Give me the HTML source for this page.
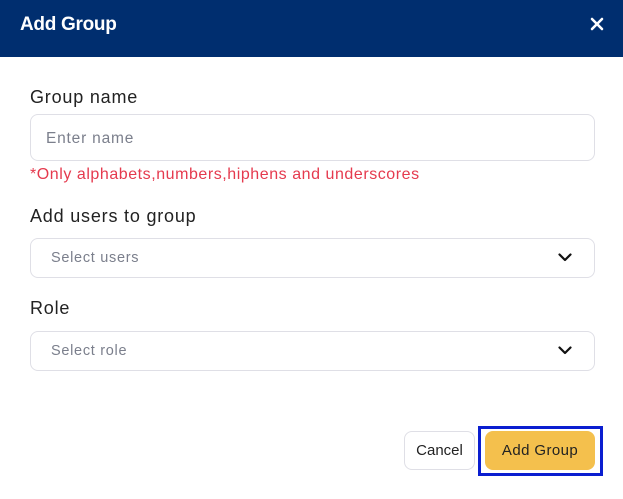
<!DOCTYPE html>
<html><head><style>
*{box-sizing:border-box;margin:0;padding:0}
body{width:623px;height:499px;background:#fff;font-family:"Liberation Sans",sans-serif;position:relative;overflow:hidden}
.hdr{position:absolute;left:0;top:0;width:623px;height:57px;background:#002e6f}
.hdr h1{position:absolute;left:20px;top:14px;font-size:19px;color:#fff;font-weight:bold;letter-spacing:-0.3px}
.lbl{position:absolute;left:30px;font-size:18px;color:#222;letter-spacing:0.8px}
.box{position:absolute;left:30px;width:565px;border:1px solid #dfdfe6;border-radius:8px;color:#7b7f8c}
.err{position:absolute;left:30px;top:166px;font-size:16px;color:#e53a4e;letter-spacing:0.55px}
.btn{position:absolute;border-radius:8px;font-size:15px;color:#222;text-align:center}
</style></head><body>
<div class="hdr"><h1>Add Group</h1>
<svg style="position:absolute;left:590px;top:17px" width="14" height="14" viewBox="0 0 14 14"><path d="M2 2L12 12M12 2L2 12" stroke="#fff" stroke-width="2.6" stroke-linecap="round"/></svg></div>
<div class="lbl" style="top:87px">Group name</div>
<div class="box" style="top:114px;height:47px;font-size:15.5px;padding:15px 0 0 15px;letter-spacing:0.8px">Enter name</div>
<div class="err">*Only alphabets,numbers,hiphens and underscores</div>
<div class="lbl" style="top:206px">Add users to group</div>
<div class="box" style="top:238px;height:40px;font-size:14.5px;padding:11px 0 0 20px;letter-spacing:0.7px">Select users
<svg style="position:absolute;right:22px;top:14px" width="14" height="9" viewBox="0 0 14 9"><path d="M1.5 1.5L7 7L12.5 1.5" stroke="#111" stroke-width="2.2" fill="none" stroke-linecap="round" stroke-linejoin="round"/></svg></div>
<div class="lbl" style="top:298px">Role</div>
<div class="box" style="top:331px;height:40px;font-size:14.5px;padding:11px 0 0 20px;letter-spacing:0.7px">Select role
<svg style="position:absolute;right:22px;top:14px" width="14" height="9" viewBox="0 0 14 9"><path d="M1.5 1.5L7 7L12.5 1.5" stroke="#111" stroke-width="2.2" fill="none" stroke-linecap="round" stroke-linejoin="round"/></svg></div>
<div class="btn" style="left:404px;top:431px;width:71px;height:39px;border:1px solid #dfdfe6;line-height:37px">Cancel</div>
<div style="position:absolute;left:478px;top:426px;width:125px;height:50px;border:3px solid #0a1ed0"></div>
<div class="btn" style="left:485px;top:431px;width:110px;height:39px;background:#f4c04d;line-height:39px;letter-spacing:0.4px">Add Group</div>
</body></html>
